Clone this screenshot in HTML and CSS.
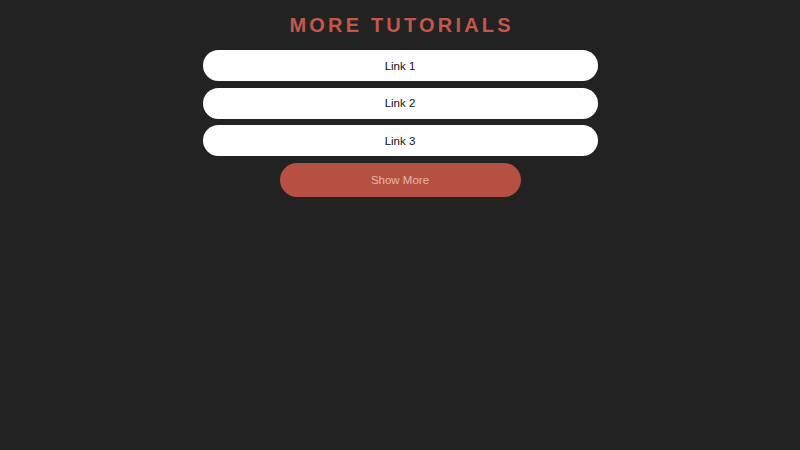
FILE: index.html
```html
<!DOCTYPE html>
<html>
<head>
<meta charset="utf-8">
<link rel="stylesheet" href="styles.css">
</head>
<body>
<div class="wrap">
  <h2 class="title">MORE TUTORIALS</h2>
  <div class="links">
    <a class="link" href="#">Link 1</a>
    <a class="link" href="#">Link 2</a>
    <a class="link" href="#">Link 3</a>
  </div>
  <button class="more">Show More</button>
</div>
</body>
</html>
```

FILE: styles.css
```css
html, body {
  margin: 0;
  padding: 0;
  background: #222222;
  font-family: "Liberation Sans", Arial, sans-serif;
}
.wrap {
  display: flex;
  flex-direction: column;
  align-items: center;
  padding-top: 13px;
}
.title {
  margin: 0 0 13px 0;
  font-size: 20px;
  line-height: 24px;
  font-weight: bold;
  letter-spacing: 3.2px;
  color: #c4574a;
  padding-left: 3.2px;
}
.links {
  display: flex;
  flex-direction: column;
  gap: 6.5px;
  width: 395px;
}
.link {
  display: flex;
  align-items: center;
  justify-content: center;
  height: 31px;
  background: #ffffff;
  color: #111111;
  border-radius: 16px;
  text-decoration: none;
  font-size: 11.5px;
}
.more {
  margin-top: 7px;
  width: 241px;
  height: 34px;
  border: none;
  border-radius: 17px;
  background: #b55043;
  color: #e6b8b0;
  font-family: "Liberation Sans", Arial, sans-serif;
  font-size: 11.5px;
}
```
